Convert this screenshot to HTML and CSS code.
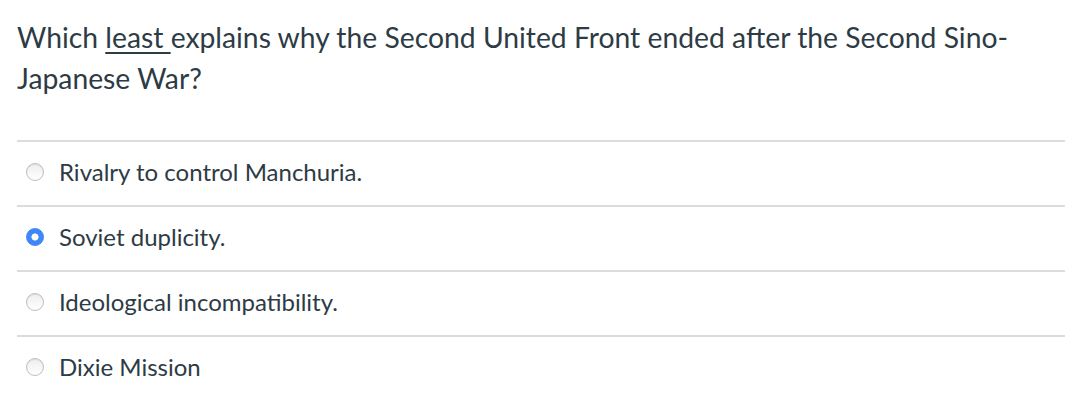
FILE: index.html
```html
<!DOCTYPE html>
<html>
<head>
<meta charset="utf-8">
<link rel="stylesheet" href="styles.css">
</head>
<body>
<div class="quiz">
  <p class="question">Which <u>least </u>explains why the Second United Front ended after the Second Sino-Japanese War?</p>
  <div class="answers">
    <label class="answer"><span class="radio"></span><span class="label">Rivalry to control Manchuria.</span></label>
    <label class="answer"><span class="radio checked"></span><span class="label">Soviet duplicity.</span></label>
    <label class="answer"><span class="radio"></span><span class="label">Ideological incompatibility.</span></label>
    <label class="answer last"><span class="radio"></span><span class="label">Dixie Mission</span></label>
  </div>
</div>
</body>
</html>
```
FILE: styles.css
```css
html, body {
  margin: 0;
  padding: 0;
  background: #fff;
}
.quiz {
  padding: 17px 9px 0 17px;
  font-family: Lato, "Open Sans", sans-serif;
  color: #2d3b45;
}
.question {
  margin: 0 0 41px 0;
  font-size: 28.3px;
  line-height: 41px;
}
.question u {
  text-decoration-thickness: 2px;
  text-underline-offset: 4px;
}
.answers {
  display: flex;
  flex-direction: column;
}
.answer {
  display: flex;
  align-items: center;
  padding-bottom: 4px;
  box-sizing: border-box;
  height: 65px;
  border-top: 2px solid #dcdcdc;
  font-size: 24px;
}
.radio {
  width: 16px;
  height: 16px;
  border-radius: 50%;
  border: 1px solid #bfbfbf;
  background: linear-gradient(#eeeeee, #ffffff);
  box-shadow: inset 0 1px 1px rgba(0, 0, 0, 0.08);
  margin-left: 9px;
  margin-right: 15px;
  flex: none;
  box-sizing: content-box;
}
.radio.checked {
  border: 1px solid #3e87f6;
  box-shadow: none;
  background: radial-gradient(circle, #fff 0 3.2px, #3e87f6 3.9px);
}
```
